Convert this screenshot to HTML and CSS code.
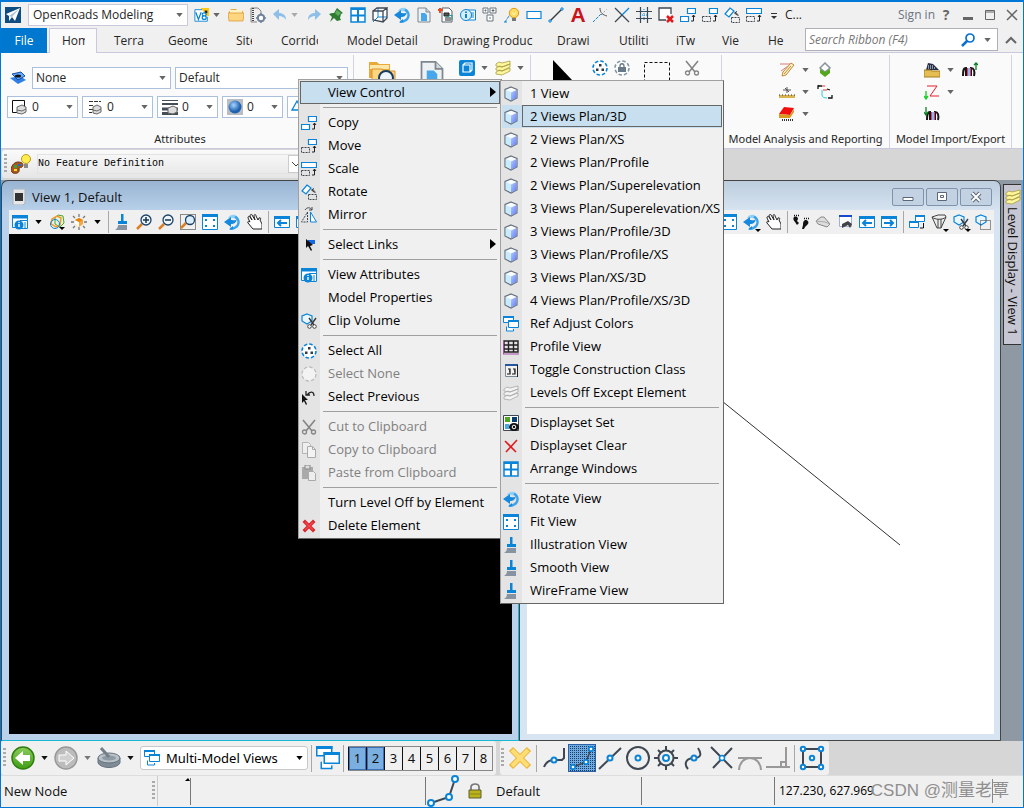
FILE: index.html
```html
<!DOCTYPE html>
<html lang="en">
<head>
<meta charset="utf-8">
<title>OpenRoads Modeling</title>
<link rel="stylesheet" href="styles.css">
</head>
<body>
<svg class="sprite" aria-hidden="true">
  <defs>
    <linearGradient id="g-cube" x1="0" y1="0" x2="1" y2="1"><stop offset="0" stop-color="#b9cbff"/><stop offset="1" stop-color="#5e7cf4"/></linearGradient>
    <linearGradient id="g-green" x1="0" y1="0" x2="0" y2="1"><stop offset="0" stop-color="#8ccc5c"/><stop offset="1" stop-color="#3f9d14"/></linearGradient>
    <radialGradient id="g-ball" cx=".4" cy=".35"><stop offset="0" stop-color="#a9d4ff"/><stop offset="1" stop-color="#1f62b0"/></radialGradient>
    <pattern id="p-dots" width="2" height="2" patternUnits="userSpaceOnUse"><rect width="1" height="1" fill="#1c3d63"/></pattern>
  </defs>
  <symbol id="logo" viewBox="0 0 16 16"><rect width="16" height="16" fill="#0f4c81"/><path d="M1 7 15 1 10 14 7 10 4 14 4 9Z" fill="#fff"/><path d="M4 9 14 2 7 10" fill="#a9c4dc"/></symbol>
  <symbol id="v8" viewBox="0 0 18 18"><path d="M8 1h9v9h-5V5H8z" fill="#ffc814"/><path d="M12 4h3v3h-3z" fill="#222"/><path d="M9 3H1v13h14v-5" fill="#fff" stroke="#0a84d8"/><path d="m2 6 3 8 3-8M11.500 6.500c-3 0-3 3.500 0 3.500s3-3.500 0-3.500m0 3.500c-3 0-3 4 0 4s3-4 0-4" fill="none" stroke="#0a84d8" stroke-width="1.400"/></symbol>
  <symbol id="folder" viewBox="0 0 16 16"><path d="M1 5 3 2h5l1 1h5l1 2v8l-1 1H2l-1-1z" fill="#e9a93a"/><path d="M2 3h12v3H2z" fill="#fff1c0"/><path d="M0 6h16l-1 8H1z" fill="#ffd680" stroke="#d89128" stroke-width=".7"/></symbol>
  <symbol id="zip" viewBox="0 0 16 16"><path d="M1 1h7l3 3v3M1 1v14h6" fill="#eee" stroke="#858585"/><path d="M3 1v13" stroke="#444" stroke-width="2" stroke-dasharray="1 1"/><circle cx="11" cy="11" r="3.200" fill="#fff" stroke="#71839a" stroke-width="2"/><path d="M11 6v1m0 8v1m-5-5h1m8 0h1M8 8l.5.5m5 5 .5.5m0-6-.5.5m-5 5L8 14" stroke="#71839a" stroke-width="1.500"/></symbol>
  <symbol id="undo" viewBox="0 0 16 16"><path d="M7 2v4c4 0 7 2 7 7-2-3-4-4-7-4v4L1 7z" fill="#8dbfe8"/></symbol>
  <symbol id="redo" viewBox="0 0 16 16"><path d="M9 2v4c-4 0-7 2-7 7 2-3 4-4 7-4v4l6-6z" fill="#8dbfe8"/></symbol>
  <symbol id="pin" viewBox="0 0 16 16"><path d="m9 1 6 5-2 1-1 4 1 2-4 1-3-3-4 4 2-5-3-3 3-1h2z" fill="#2e7d32"/><path d="m9 3 4 3-3 3-3-3z" fill="#63ad5f"/></symbol>
  <symbol id="grid4" viewBox="0 0 16 16"><path d="M1 1h14v14H1z" fill="#fff" stroke="#0a84d8" stroke-width="1.500"/><path d="M1 2h14M8 2v13M1 8.500h14" stroke="#0a84d8" stroke-width="2"/></symbol>
  <symbol id="wirecube" viewBox="0 0 16 16"><path d="M4 1h11v10l-4 4H1V4z" fill="#fff"/><path d="M6 1v9h9M6 10l-5 5" fill="none" stroke="#0a84d8"/><path d="M1 4h10v11L1 13zl4-3h10l-4 3m4-3v10l-4 4" fill="none" stroke="#3f4852" stroke-width="1.300"/></symbol>
  <symbol id="rot" viewBox="0 0 16 16"><path d="M4 4c2-4 7-4 8-2l1 3-4-1z" fill="#8fd0f8"/><path d="M11 2.500c5 3 5 10-2 12l-3 .5" fill="none" stroke="#3ba3ea" stroke-width="2.400"/><path d="M0 8l7-5v3c3 0 4 1 6-1-1 4-3 5-6 5v3z" fill="#1689df"/><path d="M5 15.500 9 12v3z" fill="#1689df"/></symbol>
  <symbol id="doc" viewBox="0 0 16 16"><path d="M2 1h8l4 4v10H2z" fill="#eef1f3" stroke="#7d8790"/><path d="M5 6h4l2 2v6H5z" fill="#48a7eb"/><path d="M10 1v4h4" fill="#d4d9dc" stroke="#7d8790"/></symbol>
  <symbol id="newdoc" viewBox="0 0 16 16"><path d="M4 1h7l3 3v11H4z" fill="#fff" stroke="#5a636b"/><path d="M6 6h5v3H6zM7 11h6M7 13h6" fill="#555" stroke="#222"/><path d="M2 1v5M0 3h5" stroke="#e44b24" stroke-width="2"/><path d="m8 10 6-2v5" fill="none" stroke="#22978c"/></symbol>
  <symbol id="info" viewBox="0 0 16 16"><path d="M8 3h7.500v10H8" fill="#fff" stroke="#0a84d8"/><path d="M11 6h3m-3 2h3m-3 2h3" stroke="#0a84d8"/><circle cx="6" cy="8" r="5.500" fill="#d8edfb" stroke="#0a84d8"/><path d="M6 7v4M6 4.500v1.500" stroke="#0a84d8" stroke-width="2"/></symbol>
  <symbol id="keys" viewBox="0 0 16 16"><path d="M1 1h5v5H1zM8 1h6v5H8zM5 8h6v6H5z" fill="#fff" stroke="#69747d"/><path d="M3 3h1v1H3zM10 3h2v1h-2zM7 11h2" stroke="#69747d"/></symbol>
  <symbol id="bulb" viewBox="0 0 16 16"><path d="m1 15 6-9M0 15h3" stroke="#0a84d8" stroke-dasharray="3 1"/><circle cx="10" cy="6" r="4.700" fill="#ffdb62" stroke="#d99b11"/><path d="M8 11h4v3H8z" fill="#777"/><path d="m8 5 2 3 2-3" fill="none" stroke="#fff7c6"/></symbol>
  <symbol id="rect" viewBox="0 0 16 16"><path d="M1 4.500h14v7H1z" fill="#fff" stroke="#0a84d8" stroke-width="1.200"/></symbol>
  <symbol id="line" viewBox="0 0 16 16"><path d="M2 14 14 2" stroke="#333c45" stroke-width="1.500"/><path d="M1 13h2v2H1zM13 1h2v2h-2z" fill="#fff" stroke="#0a84d8"/></symbol>
  <symbol id="curve" viewBox="0 0 16 16"><path d="M1 15 9 7" stroke="#0a84d8" stroke-dasharray="3 1"/><path d="M8 1c0 5 3 7 7 8" fill="none" stroke="#555"/><path d="m9 8 6-6" stroke="#555" stroke-dasharray="1 3"/></symbol>
  <symbol id="cross" viewBox="0 0 16 16"><path d="m1 1 14 14" stroke="#3f4852" stroke-width="1.300"/><path d="M15 1 8 8" stroke="#0a84d8" stroke-width="1.300"/><path d="m8 8-7 7" stroke="#3f4852" stroke-width="1.300"/></symbol>
  <symbol id="hash" viewBox="0 0 16 16"><path d="M4.500 0v16M11.500 0v16M0 4.500h16M0 11.500h16" stroke="#3f4852" stroke-width="1.200"/><path d="M8 2v12M4 8h8" stroke="#0a84d8" stroke-dasharray="1 1"/></symbol>
  <symbol id="delbox" viewBox="0 0 16 16"><path d="M8 13H1V1h12v6" fill="#fff" stroke="#3f4852" stroke-width="1.300"/><path d="m9 9 6 6m0-6-6 6" stroke="#e1191d" stroke-width="2.500"/></symbol>
  <symbol id="copy" viewBox="0 0 16 16"><path d="M7.500 1.500h8v5h-8zM.5 9.500h8v5h-8z" fill="#fff" stroke="#0a84d8" stroke-width="1.200"/><path d="M13.500 8v6H11m1-4 1.500-2 1.500 2" fill="none" stroke="#222"/></symbol>
  <symbol id="move" viewBox="0 0 16 16"><path d="M7.500 1.500h8v5h-8z" fill="#fff" stroke="#0a84d8" stroke-width="1.200"/><path d="M.5 9.500h8v5h-8z" fill="none" stroke="#3f4852" stroke-dasharray="2 1"/><path d="M13.500 8v6H11m1-4 1.500-2 1.500 2" fill="none" stroke="#222"/></symbol>
  <symbol id="scale" viewBox="0 0 16 16"><path d="M.5 1.500h15v5H.5z" fill="#fff" stroke="#0a84d8" stroke-width="1.200"/><path d="M.5 9.500h8v5h-8z" fill="none" stroke="#3f4852" stroke-dasharray="2 1"/><path d="M13.500 8v6H11m1-4 1.500-2 1.500 2" fill="none" stroke="#222"/></symbol>
  <symbol id="rotate" viewBox="0 0 16 16"><path d="m6 1 4 3-5 6-4-3z" fill="#fff" stroke="#0a84d8" stroke-width="1.200"/><path d="M7.500 10.500h8v5h-8z" fill="none" stroke="#3f4852" stroke-dasharray="2 1"/><path d="M14 9c0-2-1-3-3-3m2-1.500L10.500 6 13 8" fill="none" stroke="#333"/></symbol>
  <symbol id="mirror" viewBox="0 0 16 16"><path d="M6.500 5v10H.5z" fill="none" stroke="#3f4852" stroke-dasharray="2 1"/><path d="M9.500 5v10h6z" fill="#fff" stroke="#0a84d8"/><path d="M4 3c2-3 5-3 7 0m-3 0h3V0" fill="none" stroke="#3f4852"/></symbol>
  <symbol id="pick" viewBox="0 0 16 16"><path d="M7 3h7v4H7z" fill="#1668e4"/><path d="M5 2v9l2-2 3 5 1-1-2-4 3-1z" fill="#111"/></symbol>
  <symbol id="attrs" viewBox="0 0 16 16"><path d="M.5 1.500h15v12H.5z" fill="#fff" stroke="#0a84d8"/><path d="M0 1h16v3.500H0z" fill="#0a84d8"/><path d="M8 6.500h7.500v8H8" fill="#fff" stroke="#0a84d8"/><circle cx="7" cy="11" r="4.500" fill="#0a84d8"/><path d="M7 10v3m0-5v1" stroke="#fff" stroke-width="1.400"/><path d="M12 9h2m-2 2h2m-2 2h2" stroke="#0a84d8"/></symbol>
  <symbol id="clip" viewBox="0 0 16 16"><path d="m6 1 5 2v5l-5 3-5-3V3z" fill="#eaf6ff" stroke="#0a84d8" stroke-width="1.200"/><path d="m8 5 5 7m2-7-5 7" stroke="#333" stroke-width="1.300"/><circle cx="8.500" cy="13.500" r="1.800" fill="#fff" stroke="#444"/><circle cx="13.500" cy="13.500" r="1.800" fill="#fff" stroke="#444"/></symbol>
  <symbol id="all" viewBox="0 0 16 16"><circle cx="8" cy="8" r="7" fill="#fff" stroke="#0a84d8" stroke-width="1.600" stroke-dasharray="3.500 2"/><path d="M7 4h2.500v2.500H7zM4 8.500h2.500V11H4zM9.500 8.500H12V11H9.500z" fill="#333c45"/></symbol>
  <symbol id="none" viewBox="0 0 16 16"><circle cx="8" cy="8" r="7" fill="#f3f3f3" stroke="#bdbdbd" stroke-width="1.300" stroke-dasharray="3.500 2"/></symbol>
  <symbol id="prev" viewBox="0 0 16 16"><path d="M1 5v9l2-2 2 4 1-1-2-4h3z" fill="#111"/><path d="M6 6c3-4 7-4 7 1M5 2v4h4" fill="none" stroke="#222" stroke-width="1.300"/></symbol>
  <symbol id="cut" viewBox="0 0 16 16"><path d="m2 1 9 11m3-11L5 12" stroke="#858585" stroke-width="1.600"/><circle cx="3.500" cy="13" r="2" fill="none" stroke="#858585" stroke-width="1.300"/><circle cx="12.500" cy="13" r="2" fill="none" stroke="#858585" stroke-width="1.300"/></symbol>
  <symbol id="pages" viewBox="0 0 16 16"><path d="M1.500.5h6l2 2v9h-8z" fill="#eee" stroke="#b5b5b5"/><path d="M6.500 4.500h5l3 3v8h-8z" fill="#f3f3f3" stroke="#aaa"/><path d="M11.500 4.500v3h3" fill="none" stroke="#aaa"/></symbol>
  <symbol id="paste" viewBox="0 0 16 16"><path d="M1 2h11v12H1z" fill="#aaa"/><path d="M4 0h5v4H4z" fill="#ddd" stroke="#888"/><path d="M7.500 6.500h5l2 2v7h-7z" fill="#eee" stroke="#aaa"/></symbol>
  <symbol id="del" viewBox="0 0 16 16"><path d="m4 4 8 8m0-8-8 8" stroke="#d8232a" stroke-width="3.500" stroke-linecap="square"/><path d="m4 4 8 8m0-8-8 8" stroke="#f0494e" stroke-width="1.200"/></symbol>
  <symbol id="cube" viewBox="0 0 16 16"><path d="m8 1 6 2.500v8.500l-6 3-6-3V3.500z" fill="#e4eefc" stroke="#66707c" stroke-width="1.200"/><path d="m2.800 4 5 2.500V14l-5-2.500z" fill="#c7ecff"/><path d="m8 6.500 5.500-2.500v7.800L8 14.400z" fill="url(#g-cube)"/><path d="M8 2 3.500 4 8 6l5-2z" fill="#fafdff"/></symbol>
  <symbol id="views" viewBox="0 0 16 16"><path d="M.5.500h10v6H.5zM3.500 10.500V15h7v-2" fill="#fff" stroke="#0a84d8"/><path d="M0 0h11v2H0z" fill="#0a84d8"/><path d="M5.500 4.500h10v7h-10z" fill="#fff" stroke="#0a84d8"/><path d="M5 4h11v2H5z" fill="#0a84d8"/></symbol>
  <symbol id="profile" viewBox="0 0 16 16"><path d="M1 2h14v11H1z" fill="#e4e4e4" stroke="#222" stroke-width="1.400"/><path d="M5.500 2v11m5-11v11M1 6h14M1 10h14" stroke="#222" stroke-width="1.400"/><path d="M0 15h16M.5 2v13" stroke="#a54ca5"/></symbol>
  <symbol id="toggle" viewBox="0 0 16 16"><path d="M2.500 2.500h12v12h-12z" fill="#f2f2f2" stroke="#7c8794"/><path d="M2 2h13v2H2z" fill="#28569c"/><path d="M5 7h2v2H6m1 0v3H4m6-5h2v2h-1m1 0v3H9" fill="none" stroke="#111" stroke-width="1.200"/><path d="M14.500 3v12" stroke="#222"/></symbol>
  <symbol id="levels" viewBox="0 0 16 16"><path d="m1 12 4-2 2 1 8-3v3l-8 4-6-1zM1 8l4-2 2 1 8-3v3l-8 4-6-1zM1 4l3-2 3 1 8-2v3L7 7 1 6z" fill="#f3f3f3" stroke="#a7a7a7" stroke-width=".8"/></symbol>
  <symbol id="levelsy" viewBox="0 0 16 16"><path d="m1 12 4-2 2 1 8-3v3l-8 4-6-1zM1 8l4-2 2 1 8-3v3l-8 4-6-1zM1 4l3-2 3 1 8-2v3L7 7 1 6z" fill="#fff59a" stroke="#a79c43" stroke-width=".8"/></symbol>
  <symbol id="dset" viewBox="0 0 16 16"><path d="M.5.500h15v15H.5z" fill="#fff" stroke="#3f4852"/><path d="M2 2h5v5H2z" fill="#4ea81e"/><path d="M9 2h5v5H9z" fill="#053f75"/><path d="M2 9h4v5H2z" fill="#47a9e8"/><ellipse cx="11" cy="12" rx="5" ry="4" fill="#111"/><circle cx="11" cy="12" r="1.800" fill="none" stroke="#fff"/></symbol>
  <symbol id="clear" viewBox="0 0 16 16"><path d="m2 3 11 11m1-12L3 14" stroke="#e3191d" stroke-width="1.600"/></symbol>
  <symbol id="fit" viewBox="0 0 16 16"><path d="M.5.500h15v15H.5z" fill="#fff" stroke="#0a84d8"/><path d="M0 0h16v3H0z" fill="#0a84d8"/><path d="M3 5h2v2H3zm8 0h2v2h-2zM3 11h2v2H3zm8 0h2v2h-2z" fill="#0a84d8"/></symbol>
  <symbol id="brush" viewBox="0 0 16 16"><path d="M7 0h2.500v7H13v3H4V7h3z" fill="#0a84d8"/><path d="M4 11h9v5H1c2-1 3-3 3-5z" fill="#8793a0"/></symbol>
  <symbol id="zin" viewBox="0 0 16 16"><path d="m1 15 5-5" stroke="#dd7f22" stroke-width="2.500"/><circle cx="10" cy="6" r="5" fill="#edf5fb" stroke="#1d4266" stroke-width="1.300"/><path d="M7 6h6m-3-3v6" stroke="#16324e" stroke-width="1.500"/></symbol>
  <symbol id="zout" viewBox="0 0 16 16"><path d="m1 15 5-5" stroke="#dd7f22" stroke-width="2.500"/><circle cx="10" cy="6" r="5" fill="#edf5fb" stroke="#1d4266" stroke-width="1.300"/><path d="M7 6h6" stroke="#16324e" stroke-width="1.500"/></symbol>
  <symbol id="zwin" viewBox="0 0 16 16"><path d="M.5.500h15v15H.5z" fill="none" stroke="#222" stroke-dasharray="1 1"/><path d="m1 14 5-5" stroke="#dd7f22" stroke-width="2.500"/><circle cx="10" cy="6" r="4.500" fill="#d9edfc" stroke="#1d4266" stroke-width="1.300"/></symbol>
  <symbol id="hand" viewBox="0 0 16 16"><path d="M7 15 2 9c-1-2 1-2 2-1L2 4c0-2 1-2 2-1l2 3-2-4c0-2 2-2 2-1l3 5-1-4c0-2 2-2 2 0l2 4 1-2c2-1 2 1 1 2l2 4v5z" fill="#fff" stroke="#222"/></symbol>
  <symbol id="goprev" viewBox="0 0 16 16"><path d="M.5 2.500h15v11H.5z" fill="#fff" stroke="#0a84d8"/><path d="M0 2h16v3H0z" fill="#0a84d8"/><path d="M13 9H4m3-3L4 9l3 3" fill="none" stroke="#0a84d8" stroke-width="2"/></symbol>
  <symbol id="gonext" viewBox="0 0 16 16"><path d="M.5 2.500h15v11H.5z" fill="#fff" stroke="#0a84d8"/><path d="M0 2h16v3H0z" fill="#0a84d8"/><path d="M3 9h9M9 6l3 3-3 3" fill="none" stroke="#0a84d8" stroke-width="2"/></symbol>
  <symbol id="style" viewBox="0 0 16 16"><path d="m9 1 5 1 1 7-4 4-5-3V4z" fill="#e3f5dc" stroke="#4ca42d"/><path d="m8 2 4 2-1 7-4 2-5-3 1-5z" fill="none" stroke="#f09a2e" stroke-width="1.500"/><circle cx="6" cy="10" r="4.500" fill="none" stroke="#0a84d8"/><path d="M10 13h6l-3 3z" fill="#000"/></symbol>
  <symbol id="sun" viewBox="0 0 16 16"><path d="M8 0v3M8 13v3M0 8h3M13 8h3M2 2l2 2m8 8 2 2M14 2l-2 2M4 12l-2 2" stroke="#777" stroke-width="1.300"/><path d="m8 4 4 2v4l-4 3-4-3V6z" fill="#f5a63f"/><path d="M8 8v5l-4-3V6z" fill="#fff"/><path d="m8 4 4 2-4 2-4-2z" fill="#e88310"/></symbol>
  <symbol id="feet" viewBox="0 0 16 16"><path d="M1 3c2-1 4 0 4 2L4 7l2 2-2 2-2-3C0 6 0 4 1 3zM12 6c3 0 4 2 3 4l-3 3-1 2H9l1-4c0-2 0-4 2-5z" fill="#111"/><path d="M1 1.500h5M11 4.500h5" stroke="#111" stroke-width="1.500" stroke-dasharray="1 1"/></symbol>
  <symbol id="fly" viewBox="0 0 16 16"><path d="m1 7 5-4h3l6 7-3 3-9-3z" fill="#ddd" stroke="#888"/><path d="m1 7 9 1 5 2" fill="none" stroke="#aaa"/></symbol>
  <symbol id="nav" viewBox="0 0 16 16"><path d="M2.500 2.500h12v10h-12z" fill="#fff" stroke="#9fb1d4"/><path d="M2 1h13v2H2z" fill="#1649d0"/><path d="m5 10 6-3 4 3-2 4-2-3-6 3z" fill="#444"/></symbol>
  <symbol id="copyview" viewBox="0 0 16 16"><path d="M6.500 1.500h9v6h-9zM.5 7.500h9v6h-9z" fill="#fff" stroke="#0a84d8"/><path d="M6 1h10v2H6zM0 7h10v2H0z" fill="#0a84d8"/><path d="M14.500 9v5H11" fill="none" stroke="#111"/></symbol>
  <symbol id="frustum" viewBox="0 0 16 16"><path d="m1 3 6-2h7l1 2-5 11H6z" fill="#eee" stroke="#444"/><path d="M1 3c3 3 11 3 14 0M7 5v9m3-9v9" fill="none" stroke="#444"/></symbol>
  <symbol id="mask" viewBox="0 0 16 16"><path d="m6 1 5 2v5l-5 3-5-3V3z" fill="#eaf6ff" stroke="#0a84d8" stroke-width="1.200"/><path d="M5.500 6.500h10v9h-10z" fill="none" stroke="#333" stroke-dasharray="1 1"/></symbol>
  <symbol id="blueview" viewBox="0 0 16 16"><rect width="16" height="16" rx="2" fill="#0a84d8"/><path d="M4 5h7v7H4zl2-2h7v7l-2 2" fill="none" stroke="#fff" stroke-width="1.200"/></symbol>
  <symbol id="caret" viewBox="0 0 8 5"><path d="M0 0h8L4 5z" fill="currentColor"/></symbol>
  <symbol id="lock" viewBox="0 0 16 16"><path d="M4 8V4c0-4 8-4 8 0v4" fill="none" stroke="#777" stroke-width="1.700"/><path d="M2 7h12v8H2z" fill="#bbb31b" stroke="#5d5d34"/><path d="M2 11h12" stroke="#8c8515"/></symbol>
  <symbol id="layer" viewBox="0 0 16 16"><path d="m0 8 10-2 6 4-8 4z" fill="#2f7fe6"/><path d="m2 4 9-2 4 4-7 4z" fill="#62a9ff" stroke="#164fa3"/><ellipse cx="8" cy="6" rx="3" ry="1.500" fill="#111"/></symbol>
  <symbol id="mill" viewBox="0 0 16 16"><path d="m3 6 5-5 5 5-5 4z" fill="#fff" stroke="#8b939a" stroke-width="1.500"/><path d="m3 7 5 3 5-3v4l-5 4-5-4z" fill="#54a61d"/></symbol>
  <symbol id="clipper" viewBox="0 0 16 16"><path d="M1 2h11L2 9" fill="none" stroke="#d77b7b"/><path d="m3 14 1-4 8-9 3 2-8 10zM5 12l7-8" fill="#fff2c9" stroke="#c08a35"/></symbol>
  <symbol id="ruler" viewBox="0 0 16 16"><path d="M4 6h8M8 3v6M6 4l4 4" stroke="#555"/><path d="M0 11h16v3H0z" fill="#d8b550"/><path d="M0 11h16" stroke="#333" stroke-dasharray="1 2"/></symbol>
  <symbol id="book" viewBox="0 0 16 16"><path d="m5 1 10 1-4 7-11-1z" fill="#f00e0e"/><path d="m0 8 11 1 4-6v3l-4 6H0z" fill="#d99a20"/><path d="M3 14h11" stroke="#333" stroke-width="2" stroke-dasharray="1 1"/></symbol>
  <symbol id="path" viewBox="0 0 16 16"><path d="M5 2h3M6 6h4" fill="none" stroke="#ee3434"/><path d="M1 5V2h4M2 1 1 3m10 11h4v-3m-5-6 3 1" fill="none" stroke="#111" stroke-width="1.300"/><path d="M5 6v5c0 2 2 3 5 3" fill="none" stroke="#22cfdc"/></symbol>
  <symbol id="import" viewBox="0 0 16 16"><path d="M2 8 4 1l5 1 6 6z" fill="#252e48"/><path d="M4 4h5m-5 2h7" stroke="#fff" stroke-dasharray="1 1"/><path d="M0 8h6l2 1h8v6H0z" fill="#e4bd54" stroke="#a67d20"/></symbol>
  <symbol id="land" viewBox="0 0 16 16"><path d="M3 2h10L6 12h9" fill="none" stroke="#e51f28"/><path d="M2 7v8m-2-3 2 3 2-3" fill="none" stroke="#1dcf2d" stroke-width="1.400"/></symbol>
  <symbol id="road" viewBox="0 0 16 16"><path d="M1 14c0-4 0-8 3-8v8m5 0V6c3 0 4 3 3 8" fill="none" stroke="#171717" stroke-width="2"/><path d="M5.500 6v8m3-8v8" stroke="#e93962"/><path d="M7 6v8" stroke="#8fb6f2" stroke-width="2"/><path d="M14 8V1m-2 2 2-2 2 2" fill="none" stroke="#098322" stroke-width="1.300"/></symbol>
  <symbol id="refs" viewBox="0 0 28 26"><path d="M1 1h8l2 2h11v14H1z" fill="#e9a93a"/><path d="M2 4h19v4H2z" fill="#ffe7a8"/><path d="M4 8h10l3 2h10v15H4z" fill="#ffd680" stroke="#d89128"/><circle cx="18" cy="17" r="7" fill="#edf5fb" stroke="#173d60" stroke-width="2"/></symbol>
  <symbol id="black" viewBox="0 0 20 20"><path d="M1 0v20h19z"/></symbol>
  <symbol id="palette" viewBox="0 0 22 20"><path d="M7 8c5 0 6 3 4 5-2 1-3 0-3 2 1 4-3 5-6 4-4-2-1-11 5-11z" fill="#ac561e" stroke="#6b3412"/><path d="M3 11h3v3H3z" fill="#2fa63b"/><path d="M7 10h3v2H7z" fill="#2465cb"/><path d="M3 15h3v2H3z" fill="#ffdc28"/><circle cx="15" cy="5" r="4.500" fill="#ffed4c" stroke="#b69a2b"/><path d="M13 10h4v4h-4z" fill="#888"/></symbol>
</svg>

<div class="app">
  <header class="titlebar">
    <svg class="i logo"><use href="#logo"/></svg>
    <span class="combo workflow"><select aria-label="Workflow"><option>OpenRoads Modeling</option></select><svg class="caret"><use href="#caret"/></svg></span>
    <button class="cell" aria-label="V8 file"><svg class="i"><use href="#v8"/></svg></button>
    <svg class="caret drop"><use href="#caret"/></svg>
    <button class="cell" aria-label="Open"><svg class="i"><use href="#folder"/></svg></button>
    <button class="cell" aria-label="Compress"><svg class="i"><use href="#zip"/></svg></button>
    <button class="cell" aria-label="Undo"><svg class="i"><use href="#undo"/></svg></button>
    <svg class="caret drop dim"><use href="#caret"/></svg>
    <button class="cell" aria-label="Redo"><svg class="i"><use href="#redo"/></svg></button>
    <button class="cell" aria-label="Pin"><svg class="i"><use href="#pin"/></svg></button>
    <button class="cell" aria-label="Arrange"><svg class="i"><use href="#grid4"/></svg></button>
    <button class="cell" aria-label="Box"><svg class="i"><use href="#wirecube"/></svg></button>
    <button class="cell" aria-label="Rotate view"><svg class="i"><use href="#rot"/></svg></button>
    <button class="cell" aria-label="Models"><svg class="i"><use href="#doc"/></svg></button>
    <button class="cell" aria-label="New model"><svg class="i"><use href="#newdoc"/></svg></button>
    <button class="cell" aria-label="Information"><svg class="i"><use href="#info"/></svg></button>
    <button class="cell" aria-label="Key-in"><svg class="i"><use href="#keys"/></svg></button>
    <button class="cell" aria-label="Hint"><svg class="i"><use href="#bulb"/></svg></button>
    <button class="cell" aria-label="Place block"><svg class="i"><use href="#rect"/></svg></button>
    <button class="cell" aria-label="Place line"><svg class="i"><use href="#line"/></svg></button>
    <button class="cell letter" aria-label="Place text">A</button>
    <button class="cell" aria-label="Extend"><svg class="i"><use href="#curve"/></svg></button>
    <button class="cell" aria-label="Intersect"><svg class="i"><use href="#cross"/></svg></button>
    <button class="cell" aria-label="Hatch"><svg class="i"><use href="#hash"/></svg></button>
    <button class="cell" aria-label="Delete"><svg class="i"><use href="#delbox"/></svg></button>
    <button class="cell" aria-label="Copy"><svg class="i"><use href="#copy"/></svg></button>
    <button class="cell" aria-label="Move"><svg class="i"><use href="#move"/></svg></button>
    <button class="cell" aria-label="Rotate"><svg class="i"><use href="#rotate"/></svg></button>
    <button class="cell" aria-label="Scale"><svg class="i"><use href="#scale"/></svg></button>
    <button class="cell more-tools" aria-label="More"><svg class="i" viewBox="0 0 16 16"><path d="M5 6.500h6" stroke="#333"/><path d="M5 9h6l-3 3z" fill="#333"/></svg></button>
    <span class="doc-title">C...</span>
    <a class="signin" href="#">Sign in</a>
    <button class="cell help" aria-label="Help">?</button>
    <button class="cell" aria-label="Minimize"><svg class="i" viewBox="0 0 16 16"><path d="M3 10h10v3H3z" fill="#666"/></svg></button>
    <button class="cell" aria-label="Maximize"><svg class="i" viewBox="0 0 16 16"><path d="M3.500 3.500h9v9h-9zM3 5h10" fill="none" stroke="#666"/></svg></button>
    <button class="cell" aria-label="Close"><svg class="i" viewBox="0 0 16 16"><path d="m3 3 10 10m0-10L3 13" stroke="#666" stroke-width="1.500"/></svg></button>
  </header>

  <nav class="tabs">
    <button class="tab file">File</button>
    <button class="tab active"><span class="cut w-home">Home</span></button>
    <button class="tab"><span class="w-terra">Terra</span></button>
    <button class="tab"><span class="cut w-geom">Geometry</span></button>
    <button class="tab"><span class="cut w-site">Site</span></button>
    <button class="tab"><span class="cut w-corr">Corridors</span></button>
    <button class="tab"><span class="w-detail">Model Detail</span></button>
    <button class="tab"><span class="w-prod">Drawing Produc</span></button>
    <button class="tab"><span class="cut w-draw">Drawing</span></button>
    <button class="tab"><span class="w-util">Utiliti</span></button>
    <button class="tab"><span class="w-short">iTw</span></button>
    <button class="tab"><span class="w-short">Vie</span></button>
    <button class="tab"><span class="w-short">He</span></button>
    <span class="search"><input type="text" aria-label="Search Ribbon" placeholder="Search Ribbon (F4)"><svg class="i" viewBox="0 0 16 16"><circle cx="10" cy="6" r="4" fill="none" stroke="#0a6fd0" stroke-width="1.700"/><path d="m7 9-5 5" stroke="#0a6fd0" stroke-width="2.500"/></svg><svg class="caret"><use href="#caret"/></svg></span>
    <button class="collapse" aria-label="Collapse ribbon"><svg class="i" viewBox="0 0 16 16"><path d="m3 11 5-5 5 5" fill="none" stroke="#666" stroke-width="2"/></svg></button>
  </nav>

  <section class="ribbon">
    <div class="group g-attr">
      <div class="rrow"><svg class="i"><use href="#layer"/></svg>
        <span class="combo c-none"><select aria-label="Template"><option>None</option></select><svg class="caret"><use href="#caret"/></svg></span>
        <span class="combo c-level"><select aria-label="Level"><option>Default</option></select><svg class="caret"><use href="#caret"/></svg></span></div>
      <div class="rrow">
        <span class="combo c-wide"><svg class="pi" viewBox="0 0 18 16"><path d="M1.500 1.500h12v12h-12z" fill="#fff" stroke="#111"/><path d="m6 8 5-2 4 2v5l-4 2-5-1z" fill="#ddd" stroke="#666"/><path d="m6 11 5 1 4-2" fill="none" stroke="#666"/></svg><select aria-label="Color"><option>0</option></select><svg class="caret"><use href="#caret"/></svg></span>
        <span class="combo c-wide"><svg class="pi" viewBox="0 0 18 16"><path d="M3 2.500h12M3 6.500h4M3 10.500h4M3 13.500h3" stroke="#333" stroke-dasharray="4 1"/><path d="m7 8 4-2 4 2v5l-4 2-4-1z" fill="#ddd" stroke="#666"/><path d="m7 11 4 1 4-2" fill="none" stroke="#666"/></svg><select aria-label="Line style"><option>0</option></select><svg class="caret"><use href="#caret"/></svg></span>
        <span class="combo c-nar"><svg class="pi" viewBox="0 0 18 16"><path d="M1 1.500h16" stroke="#444d55"/><path d="M1 5h16" stroke="#444d55" stroke-width="2"/><path d="M1 10h16M1 14.500h16" stroke="#444d55" stroke-width="3"/><path d="m7 9 5-2 4 2v4l-4 2-5-1z" fill="#ddd" stroke="#666"/></svg><select aria-label="Line weight"><option>0</option></select><svg class="caret"><use href="#caret"/></svg></span>
        <span class="combo c-nar"><svg class="pi" viewBox="0 0 18 16"><path d="M1 0h16v16H1z" fill="#b9bec2"/><circle cx="9" cy="8" r="6.500" fill="url(#g-ball)"/></svg><select aria-label="Transparency"><option>0</option></select><svg class="caret"><use href="#caret"/></svg></span>
        <span class="combo c-nar"><svg class="pi" viewBox="0 0 18 16"><path d="M6 2 1 11h10zM8 13h5" fill="none" stroke="#0a84d8" stroke-width="1.300"/></svg><select aria-label="Priority"><option>0</option></select><svg class="caret"><use href="#caret"/></svg></span>
      </div>
      <span class="glabel">Attributes</span>
    </div>
    <div class="group tools g-prim">
      <button class="big" aria-label="Attach tools"><svg class="xl"><use href="#refs"/></svg></button>
      <button class="big second" aria-label="Models"><svg class="xl"><use href="#doc"/></svg></button>
      <button class="cell" aria-label="View attributes"><svg class="i"><use href="#blueview"/></svg></button><svg class="caret"><use href="#caret"/></svg>
      <button class="cell" aria-label="Level display"><svg class="i"><use href="#levelsy"/></svg></button><svg class="caret"><use href="#caret"/></svg>
    </div>
    <div class="group tools g-sel">
      <button class="big" aria-label="Element selection"><svg class="l"><use href="#black"/></svg></button>
      <button class="cell first" aria-label="Select all"><svg class="i"><use href="#all"/></svg></button>
      <button class="cell" aria-label="Lock selection"><svg class="i" viewBox="0 0 16 16"><circle cx="8" cy="8" r="7" fill="#fff" stroke="#8296a5" stroke-width="1.600" stroke-dasharray="3.500 2"/><path d="M6 8V6c0-3 4-3 4 0v2" fill="none" stroke="#68798a" stroke-width="1.300"/><path d="M4 7h8v5H4z" fill="#68798a"/></svg></button>
      <button class="big fence" aria-label="Place fence"><svg class="xl" viewBox="0 0 28 28"><path d="M1.500 2.500h25v25h-25z" fill="none" stroke="#111" stroke-dasharray="3 2"/></svg></button>
      <button class="cell" aria-label="Cut"><svg class="i"><use href="#cut"/></svg></button>
    </div>
    <div class="group g-model">
      <div class="icons"><button class="cell" aria-label="Analyze"><svg class="i"><use href="#clipper"/></svg></button><svg class="caret"><use href="#caret"/></svg><button class="cell" aria-label="Civil mill"><svg class="i"><use href="#mill"/></svg></button>
      <button class="cell" aria-label="Measure"><svg class="i"><use href="#ruler"/></svg></button><svg class="caret"><use href="#caret"/></svg><button class="cell" aria-label="Geometry path"><svg class="i"><use href="#path"/></svg></button>
      <button class="cell" aria-label="Reports"><svg class="i"><use href="#book"/></svg></button><svg class="caret"><use href="#caret"/></svg></div>
      <span class="glabel">Model Analysis and Reporting</span>
    </div>
    <div class="group g-import">
      <div class="icons"><button class="cell" aria-label="Import"><svg class="i"><use href="#import"/></svg></button><svg class="caret"><use href="#caret"/></svg><button class="cell" aria-label="Export corridor"><svg class="i"><use href="#road"/></svg></button>
      <button class="cell" aria-label="Import geometry"><svg class="i"><use href="#land"/></svg></button><svg class="caret"><use href="#caret"/></svg><span></span>
      <button class="cell" aria-label="Import corridor"><svg class="i" viewBox="0 0 16 16"><path d="M3 14c0-4 0-8 3-8v8m5 0V6c3 0 4 3 3 8" fill="none" stroke="#171717" stroke-width="2"/><path d="M7.500 6v8m3-8v8" stroke="#e93962"/><path d="M9 6v8" stroke="#8fb6f2" stroke-width="2"/><path d="M2 1v8M0 6l2 3 2-3" fill="none" stroke="#098322" stroke-width="1.300"/></svg></button></div>
      <span class="glabel">Model Import/Export</span>
    </div>
  </section>

  <div class="feature">
    <div class="feature-bar"><span class="grip"></span><svg class="pal"><use href="#palette"/></svg>
      <span class="fcombo"><select aria-label="Feature definition"><option>No Feature Definition</option></select><svg class="fdrop" viewBox="0 0 14 16"><path d="m3 6 4 4 4-4" fill="none" stroke="#444"/></svg></span></div>
  </div>

  <main class="work">
    <section class="win left">
      <div class="wtitle"><svg class="i" viewBox="0 0 16 16"><path d="M2 0h12v14l-2 2H2z" fill="#e6e6e6" stroke="#aab3bd"/><path d="M4 4h8v8H4z" fill="#333"/></svg><span>View 1, Default</span></div>
      <div class="wtools">
        <button class="cell" aria-label="View attributes"><svg class="i"><use href="#attrs"/></svg></button><svg class="caret drop"><use href="#caret"/></svg>
        <button class="cell" aria-label="Display style"><svg class="i"><use href="#style"/></svg></button>
        <button class="cell" aria-label="Brightness"><svg class="i"><use href="#sun"/></svg></button><svg class="caret drop"><use href="#caret"/></svg><span class="sep"></span>
        <button class="cell" aria-label="Update view"><svg class="i"><use href="#brush"/></svg></button>
        <button class="cell" aria-label="Zoom in"><svg class="i"><use href="#zin"/></svg></button>
        <button class="cell" aria-label="Zoom out"><svg class="i"><use href="#zout"/></svg></button>
        <button class="cell" aria-label="Window area"><svg class="i"><use href="#zwin"/></svg></button>
        <button class="cell" aria-label="Fit view"><svg class="i"><use href="#fit"/></svg></button>
        <button class="cell" aria-label="Rotate view"><svg class="i"><use href="#rot"/></svg></button>
        <button class="cell" aria-label="Pan view"><svg class="i"><use href="#hand"/></svg></button><span class="sep"></span>
        <button class="cell" aria-label="View previous"><svg class="i"><use href="#goprev"/></svg></button>
        <button class="cell" aria-label="View next"><svg class="i"><use href="#gonext"/></svg></button>
      </div>
      <div class="canvas"></div>
    </section>
    <section class="win right">
      <div class="wtitle"><span class="wbtns"><button aria-label="Minimize view"><svg viewBox="0 0 30 16"><path d="M10 8.500h10v3H10z" fill="#fff" stroke="#5b6678"/></svg></button><button aria-label="Maximize view"><svg viewBox="0 0 30 16"><path d="M10.500 3.500h9v8h-9z" fill="#fff" stroke="#5b6678"/><path d="M13.500 6.500h3v2h-3z" fill="#fff" stroke="#5b6678"/></svg></button><button aria-label="Close view"><svg viewBox="0 0 30 16"><path d="m11 4 8 8m0-8-8 8" stroke="#5b6678" stroke-width="4"/><path d="m11 4 8 8m0-8-8 8" stroke="#fff" stroke-width="2"/></svg></button></span></div>
      <div class="wtools end">
        <button class="cell" aria-label="Fit view"><svg class="i"><use href="#fit"/></svg></button>
        <button class="cell sub" aria-label="Rotate view"><svg class="i"><use href="#rot"/></svg></button>
        <button class="cell" aria-label="Pan view"><svg class="i"><use href="#hand"/></svg></button><span class="sep"></span>
        <button class="cell" aria-label="Walk"><svg class="i"><use href="#feet"/></svg></button>
        <button class="cell" aria-label="Fly"><svg class="i"><use href="#fly"/></svg></button>
        <button class="cell" aria-label="Navigate"><svg class="i"><use href="#nav"/></svg></button>
        <button class="cell" aria-label="View previous"><svg class="i"><use href="#goprev"/></svg></button>
        <button class="cell" aria-label="View next"><svg class="i"><use href="#gonext"/></svg></button><span class="sep"></span>
        <button class="cell" aria-label="Copy view"><svg class="i"><use href="#copyview"/></svg></button>
        <button class="cell sub" aria-label="Camera"><svg class="i"><use href="#frustum"/></svg></button>
        <button class="cell sub" aria-label="Clip volume"><svg class="i"><use href="#clip"/></svg></button>
        <button class="cell" aria-label="Clip mask"><svg class="i"><use href="#mask"/></svg></button>
      </div>
      <div class="canvas white"><svg class="drawing"><path d="M190 163 373 311" stroke="#333"/></svg></div>
    </section>
    <aside class="dock"><button class="docktab"><svg class="i"><use href="#levelsy"/></svg><span>Level Display - View 1</span></button></aside>
  </main>

  <footer class="bottom">
    <div class="bar"><span class="grip"></span>
      <button class="nav" aria-label="Back"><svg viewBox="0 0 24 24"><circle cx="12" cy="12" r="11" fill="url(#g-green)" stroke="#2f7d10" stroke-width="1.500"/><path d="m4 12 8-7v4h7v6h-7v4z" fill="#fff"/></svg></button><svg class="caret drop"><use href="#caret"/></svg>
      <button class="nav" aria-label="Forward"><svg viewBox="0 0 24 24"><circle cx="12" cy="12" r="11" fill="#bcbcbc" stroke="#999" stroke-width="1.500"/><path d="m20 12-8-7v4H5v6h7v4z" fill="#d0d0d0" stroke="#fff"/></svg></button><svg class="caret drop dim"><use href="#caret"/></svg>
      <button class="nav" aria-label="View toggle"><svg viewBox="0 0 24 24"><path d="M1 12v5c3 6 19 6 22 0v-5" fill="#7f8b96" stroke="#66727c"/><ellipse cx="12" cy="12" rx="11" ry="5" fill="#b9c2c9" stroke="#66727c"/><ellipse cx="12" cy="12" rx="7" ry="2.500" fill="#8e9aa4"/><path d="m4 2 8 9" stroke="#737e88" stroke-width="3"/></svg></button><svg class="caret drop"><use href="#caret"/></svg>
      <span class="combo multi"><svg class="i"><use href="#views"/></svg><select aria-label="View group"><option>Multi-Model Views</option></select><svg class="caret"><use href="#caret"/></svg></span><span class="sep"></span>
      <button class="nav" aria-label="Manage view groups"><svg viewBox="0 0 24 24"><use href="#views" width="24" height="24"/></svg></button><span class="sep"></span>
      <div class="nums"><button class="on">1</button><button class="on">2</button><button>3</button><button>4</button><button>5</button><button>6</button><button>7</button><button>8</button></div>
    </div>
    <div class="bar snaps"><span class="grip"></span>
      <button class="snap" aria-label="AccuSnap"><svg viewBox="0 0 28 28"><path d="m5 5 18 18M23 5 5 23" stroke="#e7b83b" stroke-width="6"/><path d="m6 6 16 16M22 6 6 22" stroke="#ffdd75" stroke-width="4"/></svg></button><span class="sep"></span>
      <button class="snap" aria-label="Near snap"><svg viewBox="0 0 28 28"><path d="M4 23c2-5 5-7 10-7h8l2-2V4" fill="none" stroke="#3f4852" stroke-width="2"/><circle cx="14" cy="16" r="2.500" fill="#fff" stroke="#0a84d8" stroke-width="2"/></svg></button>
      <button class="snap on" aria-label="Keypoint snap"><svg viewBox="0 0 28 28"><path d="M0 0h28v28H0z" fill="url(#p-dots)"/><path d="m5 23 13-5 5-13" fill="none" stroke="#3f4852" stroke-width="1.500"/><g fill="#fff" stroke="#0a84d8" stroke-width="1.700"><circle cx="5" cy="23" r="2.200"/><circle cx="18" cy="18" r="2.200"/><circle cx="23" cy="5" r="2.200"/></g></svg></button>
      <button class="snap" aria-label="Midpoint snap"><svg viewBox="0 0 28 28"><path d="M3 25 25 4" stroke="#3f4852" stroke-width="2"/><circle cx="14" cy="14" r="2.500" fill="#fff" stroke="#0a84d8" stroke-width="2"/></svg></button>
      <button class="snap" aria-label="Center snap"><svg viewBox="0 0 28 28"><circle cx="14" cy="14" r="11" fill="none" stroke="#3f4852" stroke-width="2"/><circle cx="14" cy="14" r="2.500" fill="#fff" stroke="#0a84d8" stroke-width="2"/></svg></button>
      <button class="snap" aria-label="Origin snap"><svg viewBox="0 0 28 28"><circle cx="14" cy="14" r="7.500" fill="none" stroke="#3f4852" stroke-width="2"/><path d="M14 2v4m0 16v4M2 14h4m16 0h4M6 6l3 3m10 10 3 3m0-16-3 3M9 19l-3 3" stroke="#3f4852" stroke-width="2"/><circle cx="14" cy="14" r="3" fill="#fff" stroke="#0a84d8" stroke-width="2"/></svg></button>
      <button class="snap" aria-label="Bisector snap"><svg viewBox="0 0 28 28"><path d="M8 25c-5-6-1-11 6-11 7 0 8-4 4-10" fill="none" stroke="#3f4852" stroke-width="2"/><circle cx="14" cy="14" r="2.500" fill="#fff" stroke="#0a84d8" stroke-width="2"/></svg></button>
      <button class="snap" aria-label="Intersection snap"><svg viewBox="0 0 28 28"><path d="m3 3 21 21m0-20L5 24" stroke="#3f4852" stroke-width="2"/><circle cx="14" cy="14" r="2.500" fill="#fff" stroke="#0a84d8" stroke-width="1.500"/></svg></button>
      <button class="snap" aria-label="Tangent snap"><svg viewBox="0 0 28 28"><path d="M2 14h24M3 26c1-16 21-16 22 0" fill="none" stroke="#999" stroke-width="2"/></svg></button>
      <button class="snap" aria-label="Perpendicular snap"><svg viewBox="0 0 28 28"><path d="M2 23h24M22 3v20M17 23v-5h5" fill="none" stroke="#999" stroke-width="2"/></svg></button><span class="sep"></span>
      <button class="snap" aria-label="Multi-snap"><svg viewBox="0 0 28 28"><path d="M5 5h18v18H5z" fill="none" stroke="#3f4852" stroke-width="2"/><g fill="#fff" stroke="#0a84d8" stroke-width="2"><circle cx="5" cy="5" r="2.200"/><circle cx="23" cy="5" r="2.200"/><circle cx="5" cy="23" r="2.200"/><circle cx="23" cy="23" r="2.200"/><circle cx="14" cy="14" r="2.200"/></g></svg></button>
    </div>
  </footer>

  <div class="status">
    <span class="s-msg">New Node<span class="grip"></span></span>
    <span class="s-mark"><svg viewBox="0 0 8 28"><path d="M7.500 1v27" stroke="#777"/><path d="M2 4 5 1l2 3z"/></svg></span>
    <span class="s-snap"><svg viewBox="0 0 32 32"><path d="m4 28 18-6 6-18" fill="none" stroke="#3f4852" stroke-width="2"/><g fill="#fff" stroke="#0a84d8" stroke-width="2"><circle cx="4" cy="28" r="3"/><circle cx="22" cy="22" r="3"/><circle cx="28" cy="4" r="3"/></g></svg><svg class="i"><use href="#lock"/></svg><span>Default</span></span>
    <span class="s-gap"></span>
    <span class="s-coord">127.230, 627.969</span>
    <span class="mark">CSDN @测量老覃</span>
  </div>
</div>

<div class="menu m1" role="menu">
  <button class="item hot">View Control<svg class="more" viewBox="0 0 6 10"><path d="M0 0v10l6-5z"/></svg></button>
  <hr>
  <button class="item"><svg class="i"><use href="#copy"/></svg>Copy</button>
  <button class="item"><svg class="i"><use href="#move"/></svg>Move</button>
  <button class="item"><svg class="i"><use href="#scale"/></svg>Scale</button>
  <button class="item"><svg class="i"><use href="#rotate"/></svg>Rotate</button>
  <button class="item"><svg class="i"><use href="#mirror"/></svg>Mirror</button>
  <hr>
  <button class="item"><svg class="i"><use href="#pick"/></svg>Select Links<svg class="more" viewBox="0 0 6 10"><path d="M0 0v10l6-5z"/></svg></button>
  <hr>
  <button class="item"><svg class="i"><use href="#attrs"/></svg>View Attributes</button>
  <button class="item">Model Properties</button>
  <button class="item"><svg class="i"><use href="#clip"/></svg>Clip Volume</button>
  <hr>
  <button class="item"><svg class="i"><use href="#all"/></svg>Select All</button>
  <button class="item" disabled><svg class="i"><use href="#none"/></svg>Select None</button>
  <button class="item"><svg class="i"><use href="#prev"/></svg>Select Previous</button>
  <hr>
  <button class="item" disabled><svg class="i"><use href="#cut"/></svg>Cut to Clipboard</button>
  <button class="item" disabled><svg class="i"><use href="#pages"/></svg>Copy to Clipboard</button>
  <button class="item" disabled><svg class="i"><use href="#paste"/></svg>Paste from Clipboard</button>
  <hr>
  <button class="item">Turn Level Off by Element</button>
  <button class="item"><svg class="i"><use href="#del"/></svg>Delete Element</button>
</div>

<div class="menu m2" role="menu">
  <button class="item"><svg class="i"><use href="#cube"/></svg>1 View</button>
  <button class="item picked"><svg class="i"><use href="#cube"/></svg>2 Views Plan/3D</button>
  <button class="item"><svg class="i"><use href="#cube"/></svg>2 Views Plan/XS</button>
  <button class="item"><svg class="i"><use href="#cube"/></svg>2 Views Plan/Profile</button>
  <button class="item"><svg class="i"><use href="#cube"/></svg>2 Views Plan/Superelevation</button>
  <button class="item"><svg class="i"><use href="#cube"/></svg>3 Views Plan/Superelevation/XS</button>
  <button class="item"><svg class="i"><use href="#cube"/></svg>3 Views Plan/Profile/3D</button>
  <button class="item"><svg class="i"><use href="#cube"/></svg>3 Views Plan/Profile/XS</button>
  <button class="item"><svg class="i"><use href="#cube"/></svg>3 Views Plan/XS/3D</button>
  <button class="item"><svg class="i"><use href="#cube"/></svg>4 Views Plan/Profile/XS/3D</button>
  <button class="item"><svg class="i"><use href="#views"/></svg>Ref Adjust Colors</button>
  <button class="item"><svg class="i"><use href="#profile"/></svg>Profile View</button>
  <button class="item"><svg class="i"><use href="#toggle"/></svg>Toggle Construction Class</button>
  <button class="item"><svg class="i"><use href="#levels"/></svg>Levels Off Except Element</button>
  <hr>
  <button class="item"><svg class="i"><use href="#dset"/></svg>Displayset Set</button>
  <button class="item"><svg class="i"><use href="#clear"/></svg>Displayset Clear</button>
  <button class="item"><svg class="i"><use href="#grid4"/></svg>Arrange Windows</button>
  <hr>
  <button class="item"><svg class="i"><use href="#rot"/></svg>Rotate View</button>
  <button class="item"><svg class="i"><use href="#fit"/></svg>Fit View</button>
  <button class="item"><svg class="i"><use href="#brush"/></svg>Illustration View</button>
  <button class="item"><svg class="i"><use href="#brush"/></svg>Smooth View</button>
  <button class="item"><svg class="i"><use href="#brush"/></svg>WireFrame View</button>
</div>
</body>
</html>
```

FILE: styles.css
```css
* { box-sizing: border-box; }
body { margin: 0; font: 12px/16px "Open Sans", "Noto Sans", sans-serif; color: #262626; }
button, select, input { font: inherit; color: inherit; border: 0; padding: 0; margin: 0; background: none; min-width: 0; }
select { appearance: none; outline: 0; flex: 1; }
svg { flex: none; display: block; }
.sprite { position: absolute; width: 0; height: 0; }
.i { width: 16px; height: 16px; }
.caret { width: 7px; height: 4px; color: #666; }
.cell { width: 22px; height: 22px; display: flex; align-items: center; justify-content: center; flex: none; }
.sep { width: 1px; height: 22px; background: #a8a8a8; margin: 0 2px 0 3px; flex: none; }
.grip { width: 3px; height: 20px; flex: none; background: repeating-linear-gradient(#aaa 0 2px, transparent 2px 4px); }

.app { min-height: 100vh; display: flex; flex-direction: column; border: 1px solid #0078d7; background: #f0f0f0; overflow: hidden; }

.titlebar { height: 27px; display: flex; align-items: center; border-top: 1px solid #0078d7; padding: 0 0 0 4px; }
.logo { margin-right: 7px; }
.combo { display: flex; align-items: center; background: #fff; border: 1px solid #abc0dc; height: 22px; padding: 0 4px 0 3px; }
.workflow { width: 160px; border-color: #c9c9dd; margin-right: 3px; padding-left: 4px; }
.titlebar .drop { margin: 0 5px 0 0; }
.dim { color: #aaa; }
.letter { font: bold 21px/22px "Liberation Sans", sans-serif; color: #c8141a; }
.more-tools { margin-left: -2px; }
.doc-title { flex: 1; }
.signin { color: #6b7480; text-decoration: none; }
.help { font: bold 14px/20px "Open Sans", sans-serif; color: #666; }

.tabs { height: 25px; display: flex; border-bottom: 1px solid #c9c9dd; }
.tab { height: 25px; padding: 0 14px 0 15px; }
.tab span { display: block; white-space: nowrap; text-align: left; }
.tab .cut { overflow: hidden; }
.file { width: 46px; padding: 0; background: #0078cf; color: #fff; margin-right: 2px; }
.active { background: #fafafa; border: 1px solid #c9c9dd; border-bottom: 0; padding: 0 11px 0 12px; margin-right: 2px; }
.w-home { width: 23px; } .w-terra { width: 25px; } .w-geom { width: 39px; } .w-site { width: 16px; }
.w-corr { width: 37px; } .w-detail { width: 67px; } .w-prod { width: 85px; } .w-draw { width: 33px; }
.w-util { width: 28px; } .w-short { width: 17px; }
.search { display: flex; align-items: center; width: 193px; height: 23px; margin-left: auto; background: #fff; border: 1px solid #b0b0b8; padding: 0 6px 0 3px; gap: 8px; }
.search input { flex: 1; font-style: italic; outline: 0; }
.search input::placeholder { color: #777; opacity: 1; }
.collapse { width: 25px; display: flex; align-items: center; justify-content: center; }

.ribbon { height: 96px; display: flex; background: #fafafa; border-bottom: 1px solid #c9c9dd; }
.group { border-right: 1px solid #d2d2e4; display: flex; flex-direction: column; margin: 2px 0 0; flex: none; }
.g-attr { width: 353px; padding: 12px 0 0 6px; gap: 7px; }
.rrow { display: flex; align-items: center; gap: 4px; height: 22px; }
.rrow > .i { margin: 0 2px 0 3px; }
.c-none { width: 139px; } .c-level { width: 173px; } .c-wide { width: 71px; } .c-nar { width: 61px; }
.pi { width: 18px; height: 16px; margin-right: 3px; }
.glabel { text-align: center; margin-top: auto; white-space: nowrap; font: 11px/19px "Noto Sans", sans-serif; }
.group.tools { flex-direction: row; align-items: flex-start; padding-top: 2px; }
.g-prim { width: 177px; padding-left: 10px; }
.xl { width: 28px; height: 28px; } .l { width: 20px; height: 20px; }
.big { display: flex; justify-content: center; width: 36px; padding-top: 3px; }
.second { margin-left: 14px; margin-right: 6px; }
.tools .caret { margin: 9px 4px 0 3px; }
.g-sel { width: 191px; padding-left: 9px; }
.g-sel .big { width: 44px; }
.g-sel .first { margin-left: 5px; }
.g-sel .fence { width: 48px; }
.g-model { width: 168px; }
.icons { display: grid; grid-template-columns: 22px 10px 22px; align-content: start; align-items: center; justify-content: center; justify-items: center; column-gap: 3px; padding-top: 4px; }
.g-import { width: 122px; }

.feature { height: 31px; background: #d6d6d6; padding: 1px 0 2px 1px; }
.feature-bar { width: 302px; height: 28px; display: flex; align-items: center; gap: 4px; background: linear-gradient(#fafafa, #e6e6e6); border-radius: 3px; padding-left: 2px; }
.pal { width: 22px; height: 20px; }
.fcombo { flex: 1; display: flex; align-items: center; height: 20px; border: 1px solid #e2e2e2; font: 10px/16px "Liberation Mono", monospace; color: #000; }
.fcombo select { padding-bottom: 1px; }
.fdrop { width: 14px; height: 16px; background: #fff; outline: 1px solid #ccc; }

.work { flex: 1; display: flex; background: #8e99a3; min-height: 300px; }
.win { display: flex; flex-direction: column; border: 1px solid #444; border-radius: 7px 7px 0 0; padding: 1px 6px 6px; }
.left { flex: 519; background: linear-gradient(#98b4d2, #b9d1ea 30px); border-bottom-color: #18b9d4; border-right-color: #18b9d4; padding-left: 7px; }
.right { flex: 482; background: linear-gradient(#bccddd, #d7e4f2 30px); padding-left: 7px; }
.wtitle { height: 28px; display: flex; align-items: center; gap: 5px; padding: 2px 0 0 2px; font: 13px/18px "Open Sans", sans-serif; color: #111; }
.wbtns { margin-left: auto; display: flex; gap: 2px; padding-right: 2px; }
.wbtns button { width: 32px; height: 18px; border: 1px solid #8093ab; border-radius: 2px; background: #c3d2e2; }
.wbtns svg { width: 30px; height: 16px; }
.wtools { height: 24px; display: flex; align-items: center; background: #f0f0f0; overflow: hidden; padding-bottom: 1px; }
.wtools .drop { color: #000; margin: 0 4px; }
.sub { position: relative; }
.sub::after { content: ""; position: absolute; right: 1px; bottom: 1px; border: 3px solid transparent; border-top-color: #000; border-bottom: 0; }
.end { justify-content: flex-end; }
.canvas { flex: 1; background: #000; }
.white { background: #fff; }
.drawing { width: 100%; height: 100%; }
.dock { width: 22px; flex: none; padding: 4px 1px 0 2px; }
.docktab { writing-mode: vertical-rl; display: flex; align-items: center; gap: 2px; width: 18px; height: 161px; padding-top: 4px; border: 1px solid #333; border-right: 0; background: #c6c7d2; font: 13px/16px "Open Sans", sans-serif; color: #111; white-space: nowrap; }

.bottom { height: 34px; display: flex; background: #d6d6d6; gap: 4px; }
.bar { display: flex; align-items: center; background: #f0f0f0; padding-left: 2px; border-radius: 3px; }
.bar .drop { color: #111; margin: 0 6px; }
.bar .dim { color: #777; }
.nav, .nav svg { width: 24px; height: 24px; }
.bar .grip { margin-right: 5px; }
.bar .sep { height: 27px; margin: 0 4px 0 3px; }
.multi { width: 168px; height: 24px; border: 1px solid #c8c8c8; border-radius: 3px; gap: 6px; font: 13px/18px "Noto Sans", sans-serif; color: #000; }
.multi .caret { color: #000; }
.nums { display: flex; border: 1px solid #888; border-left: 0; margin-right: 3px; font: 13px/18px "Noto Sans", sans-serif; }
.nums button { width: 18px; height: 23px; border-left: 1px solid #111; color: #111; }
.nums .on { background: #7bafdf; box-shadow: inset 0 0 0 1px #3c71b8; }
.snaps .grip { margin-right: 2px; }
.snap, .snap svg { width: 28px; height: 28px; }
.bar.snaps .sep { margin: 0 3px 0 2px; }
.snap.on { background: #6eaae0; outline: 1px solid #2c61a8; outline-offset: -1px; }
.bar.snaps { padding-left: 1px; padding-right: 3px; }

.status { height: 32px; display: flex; align-items: center; border-top: 1px solid #ddd; padding-bottom: 1px; font: 13px/18px "Open Sans", sans-serif; color: #111; }
.s-msg { display: flex; align-items: center; justify-content: space-between; flex: none; width: 157px; height: 30px; padding: 0 2px 0 3px; border-right: 1px solid #ccc; }
.s-mark { flex: none; width: 268px; height: 28px; padding-left: 25px; border-right: 1px solid #777; }
.s-mark svg { width: 8px; height: 28px; }
.s-snap { flex: none; display: flex; align-items: center; gap: 8px; width: 216px; height: 28px; padding-left: 1px; border-right: 1px solid #777; }
.s-snap > svg:first-child { width: 32px; height: 32px; }
.s-snap .i { margin-right: 5px; }
.s-gap { flex: none; width: 133px; height: 28px; border-right: 1px solid #777; }
.s-coord { flex: none; width: 95px; padding-left: 4px; font: 12px/18px "Open Sans", sans-serif; color: #000; white-space: nowrap; }
.mark { position: relative; margin: 0 14px 0 auto; font: 17px/24px "Liberation Sans", "Noto Sans CJK SC", sans-serif; color: #8f8f8f; white-space: nowrap; }
.mark::after { content: ""; position: absolute; right: 16px; top: 0; bottom: 0; width: 1px; background: #888; }

.menu { position: absolute; border: 1px solid #a0a0a0; border-right-color: #666; border-bottom-color: #666; padding: 1px; background: linear-gradient(90deg, #e4e4e4 0 21px, #f0f0f0 21px); font: 13px/18px "Open Sans", sans-serif; color: #000; }
.m1 { left: 298px; top: 79px; width: 204px; }
.m2 { left: 500px; top: 80px; width: 224px; }
.item { position: relative; display: flex; align-items: center; width: 100%; height: 23px; padding: 0 0 1px 28px; white-space: nowrap; }
.item .i { position: absolute; left: 1px; top: 4px; }
.item:disabled { color: #808080; }
.more { width: 6px; height: 10px; margin: 0 4px 0 auto; }
.hot { background: #c7dfef; outline: 1px solid #666; outline-offset: -1px; }
.picked { background: #c7dfef; }
.picked::after { content: ""; position: absolute; inset: 0 0 1px 20px; border: 1px solid #666; }
.menu hr { height: 1px; border: 0; margin: 3px 3px 3px 23px; background: #a0a0a0; }
```
